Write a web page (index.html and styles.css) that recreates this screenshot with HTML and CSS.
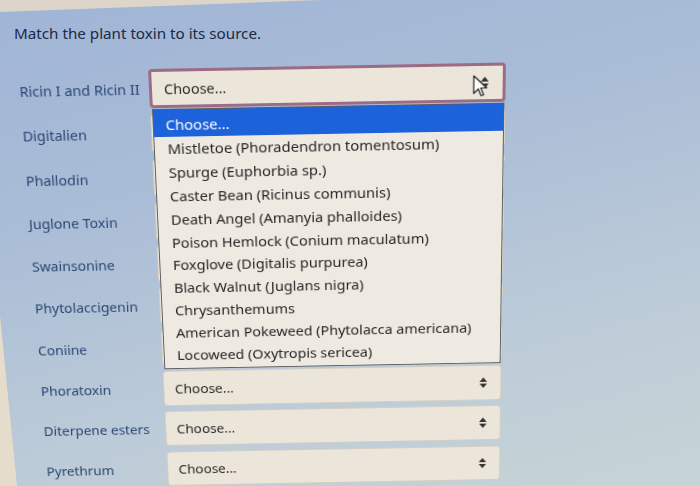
FILE: index.html
```html
<!DOCTYPE html>
<html>
<head>
  <meta charset="utf-8">
  <title>Match the plant toxin to its source</title>
  <link rel="stylesheet" href="styles.css">
</head>
<body>
  <div class="page">
    <p class="question">Match the plant toxin to its source.</p>

    <div class="quiz">
      <div class="label">Ricin I and Ricin II</div>
      <div class="select open">
        <span>Choose...</span>
        <svg class="updown" width="8" height="12" viewBox="0 0 8 12"><path d="M4 0 L8 5 H0 Z M0 7 H8 L4 12 Z" fill="#333"/></svg>
        <svg class="cursor" width="16" height="24" viewBox="0 0 16 24"><path d="M1 1 V19 L5.5 14.5 L8.5 21.5 L11 20.5 L8 13.5 H14 Z" fill="#fff" stroke="#222" stroke-width="1.2" stroke-linejoin="round"/></svg>
        <ul class="options">
          <li class="active">Choose...</li>
          <li>Mistletoe (Phoradendron tomentosum)</li>
          <li>Spurge (Euphorbia sp.)</li>
          <li>Caster Bean (Ricinus communis)</li>
          <li>Death Angel (Amanyia phalloides)</li>
          <li>Poison Hemlock (Conium maculatum)</li>
          <li>Foxglove (Digitalis purpurea)</li>
          <li>Black Walnut (Juglans nigra)</li>
          <li>Chrysanthemums</li>
          <li>American Pokeweed (Phytolacca americana)</li>
          <li>Locoweed (Oxytropis sericea)</li>
        </ul>
      </div>

      <!-- these selects sit under the open list -->
      <div class="label">Digitalien</div>
      <div class="select"></div>

      <div class="label">Phallodin</div>
      <div class="select"></div>

      <div class="label">Juglone Toxin</div>
      <div class="select"></div>

      <div class="label">Swainsonine</div>
      <div class="select"></div>

      <div class="label">Phytolaccigenin</div>
      <div class="select"></div>

      <div class="label">Coniine</div>
      <div class="select"></div>

      <div class="label">Phoratoxin</div>
      <div class="select">
        <span>Choose...</span>
        <svg class="updown" width="8" height="12" viewBox="0 0 8 12"><path d="M4 0 L8 5 H0 Z M0 7 H8 L4 12 Z" fill="#333"/></svg>
      </div>

      <div class="label">Diterpene esters</div>
      <div class="select">
        <span>Choose...</span>
        <svg class="updown" width="8" height="12" viewBox="0 0 8 12"><path d="M4 0 L8 5 H0 Z M0 7 H8 L4 12 Z" fill="#333"/></svg>
      </div>

      <div class="label">Pyrethrum</div>
      <div class="select">
        <span>Choose...</span>
        <svg class="updown" width="8" height="12" viewBox="0 0 8 12"><path d="M4 0 L8 5 H0 Z M0 7 H8 L4 12 Z" fill="#333"/></svg>
      </div>
    </div>
  </div>
</body>
</html>
```

FILE: styles.css
```css
html, body {
  margin: 0;
  padding: 0;
  height: 486px;
  overflow: hidden;
}

body {
  font-family: "Noto Sans", "Open Sans", sans-serif;
  background: linear-gradient(165deg, #a0b4d6 0%, #aabdd6 35%, #bccbd8 70%, #c7d4d6 100%);
  position: relative;
}

/* light bezel strips at the photo's edges */
body::before {
  content: "";
  position: absolute;
  left: 0;
  top: 0;
  width: 320px;
  height: 12px;
  background: #ddd5ca;
  clip-path: polygon(0 0, 100% 0, 0 100%);
}

body::after {
  content: "";
  position: absolute;
  left: 0;
  bottom: 0;
  width: 17px;
  height: 170px;
  background: #e6dccb;
  clip-path: polygon(0 0, 100% 100%, 0 100%);
}

.page {
  padding: 22px 14px 0;
}

.question {
  margin: 0;
  font-size: 15.2px;
  line-height: 22px;
  color: #1d2846;
}

.quiz {
  margin-top: 22px;
  margin-left: 4px;
  display: grid;
  grid-template-columns: 130px 358px;
  grid-auto-rows: 40px;
  row-gap: 6.3px;
  transform-origin: 300px 0;
  transform: rotate(-1.05deg) perspective(1000px) rotateX(-10deg);
}

.label {
  display: flex;
  align-items: center;
  font-size: 14.5px;
  color: #2b4674;
}

.select {
  position: relative;
  display: flex;
  align-items: center;
  justify-content: space-between;
  padding: 0 14px 0 11px;
  background: #ece6da;
  border: 1px solid #d6cfc2;
  border-radius: 4px;
  font-size: 14.5px;
  color: #2a2a2a;
}

.select.open {
  border: 3px solid #9c6b86;
  padding-left: 12px;
  z-index: 2;
}

.cursor {
  position: absolute;
  right: 14px;
  top: 9px;
}

.options {
  position: absolute;
  left: -1px;
  top: calc(100% + 4px);
  width: 353px;
  margin: 0;
  padding: 0 0 2px;
  list-style: none;
  background: #eeeae2;
  border: 1px solid #5e5e5e;
  font-size: 15px;
  color: #262626;
}

.options li {
  line-height: 24.9px;
  padding-left: 13px;
}

.options li.active {
  background: #1c62da;
  color: #fff;
  padding-top: 3px;
  padding-left: 12px;
}
```
